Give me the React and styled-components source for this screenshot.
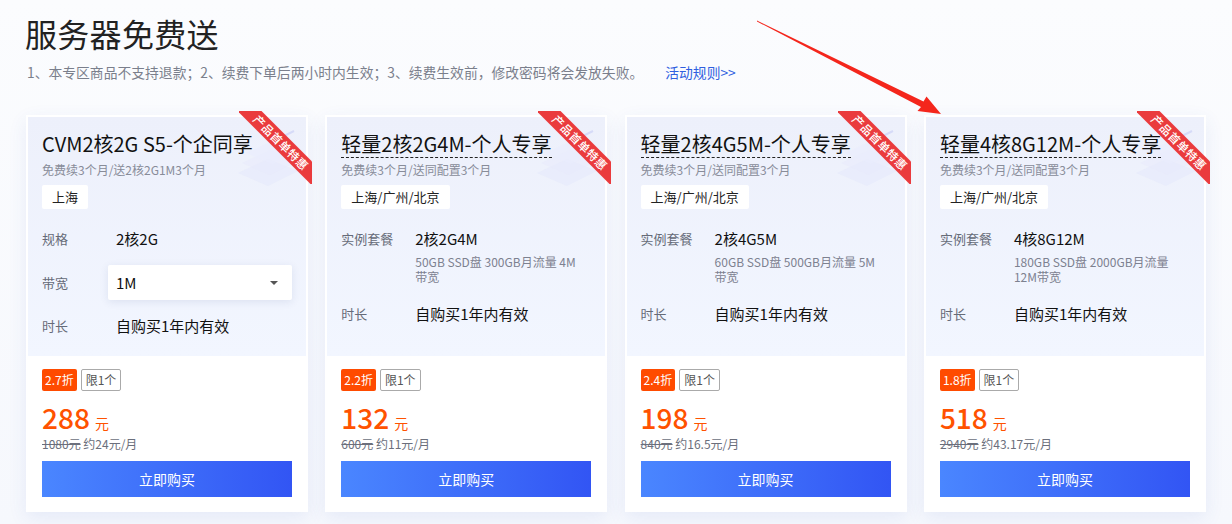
import React from "react";
import styled, { createGlobalStyle } from "styled-components";

const GlobalStyle = createGlobalStyle`
  html, body {
    margin: 0;
    padding: 0;
    background: #f8f9fd;
  }
  body {
    font-family: "Noto Sans CJK SC", "Noto Sans", sans-serif;
    color: #222;
  }
`;

const plans = [
  {
    title: "CVM2核2G S5-个企同享",
    dashed: false,
    sub: "免费续3个月/送2核2G1M3个月",
    region: "上海",
    rows: [
      { label: "规格", value: "2核2G" },
      { label: "带宽", select: "1M" },
      { label: "时长", value: "自购买1年内有效" },
    ],
    discount: "2.7折",
    price: "288",
    origin: "1080元",
    monthly: "约24元/月",
  },
  {
    title: "轻量2核2G4M-个人专享",
    dashed: true,
    sub: "免费续3个月/送同配置3个月",
    region: "上海/广州/北京",
    rows: [
      { label: "实例套餐", value: "2核2G4M", desc: ["50GB SSD盘 300GB月流量 4M", "带宽"] },
      { label: "时长", value: "自购买1年内有效" },
    ],
    discount: "2.2折",
    price: "132",
    origin: "600元",
    monthly: "约11元/月",
  },
  {
    title: "轻量2核4G5M-个人专享",
    dashed: true,
    sub: "免费续3个月/送同配置3个月",
    region: "上海/广州/北京",
    rows: [
      { label: "实例套餐", value: "2核4G5M", desc: ["60GB SSD盘 500GB月流量 5M", "带宽"] },
      { label: "时长", value: "自购买1年内有效" },
    ],
    discount: "2.4折",
    price: "198",
    origin: "840元",
    monthly: "约16.5元/月",
  },
  {
    title: "轻量4核8G12M-个人专享",
    dashed: true,
    sub: "免费续3个月/送同配置3个月",
    region: "上海/广州/北京",
    rows: [
      { label: "实例套餐", value: "4核8G12M", desc: ["180GB SSD盘 2000GB月流量", "12M带宽"] },
      { label: "时长", value: "自购买1年内有效" },
    ],
    discount: "1.8折",
    price: "518",
    origin: "2940元",
    monthly: "约43.17元/月",
  },
];

export default function App() {
  return (
    <>
      <GlobalStyle />
      <Page>
        <Header>
          <Title>服务器免费送</Title>
          <Notice>
            1、本专区商品不支持退款；2、续费下单后两小时内生效；3、续费生效前，修改密码将会发放失败。
            <RuleLink href="#">活动规则&gt;&gt;</RuleLink>
          </Notice>
        </Header>
        <Cards>
          {plans.map((p) => (
            <Card key={p.title}>
              <Top>
                <Deco viewBox="0 0 80 80">
                  <path d="M14 52 L44 38 L74 50 L44 65 Z" fill="#e4e7fb" opacity="0.5" />
                  <path d="M18 42 L46 29 L74 40 L46 54 Z" fill="#e7e9fc" opacity="0.5" />
                  <path d="M22 32 L48 20 L74 30 L48 43 Z" fill="#eaecfd" opacity="0.6" />
                  <path d="M58 16 L70 10" stroke="#d6dbf8" strokeWidth="2" />
                </Deco>
                <Ribbon>
                  <Strip>产品首单特惠</Strip>
                </Ribbon>
                <PlanTitle $dashed={p.dashed}>{p.title}</PlanTitle>
                <PlanSub>{p.sub}</PlanSub>
                <Region>{p.region}</Region>
                <Rows>
                  {p.rows.map((r) =>
                    r.select ? (
                      <Row key={r.label} $center>
                        <Label>{r.label}</Label>
                        <Select>
                          {r.select}
                          <Caret />
                        </Select>
                      </Row>
                    ) : (
                      <Row key={r.label}>
                        <Label>{r.label}</Label>
                        <ValueCol>
                          <Value>{r.value}</Value>
                          {r.desc && (
                            <Desc>
                              {r.desc.map((line) => (
                                <span key={line}>{line}</span>
                              ))}
                            </Desc>
                          )}
                        </ValueCol>
                      </Row>
                    )
                  )}
                </Rows>
              </Top>
              <Bottom>
                <Badges>
                  <Discount>{p.discount}</Discount>
                  <Limit>限1个</Limit>
                </Badges>
                <Price>
                  <Amount>{p.price}</Amount>
                  <Unit>元</Unit>
                </Price>
                <Origin>
                  <s>{p.origin}</s> {p.monthly}
                </Origin>
                <BuyButton>立即购买</BuyButton>
              </Bottom>
            </Card>
          ))}
        </Cards>
        <Arrow width="1232" height="130" viewBox="0 0 1232 130">
          <polygon
            points="757,20.5 757,21.5 921,107 917.5,111 941,114 926.5,96.5 923.5,101.5"
            fill="#f4261c"
          />
        </Arrow>
      </Page>
    </>
  );
}

const Page = styled.div`
  position: relative;
  width: 1232px;
  height: 524px;
  overflow: hidden;
  background: linear-gradient(180deg, #fbfcfe 0%, #f6f8fd 100%);
`;

const Header = styled.div`
  padding: 13px 0 0 25px;
`;

const Title = styled.h1`
  margin: 0;
  font-size: 32px;
  line-height: 40px;
  font-weight: 400;
  color: #222;
  letter-spacing: 0.3px;
`;

const Notice = styled.p`
  margin: 9px 0 0 2px;
  font-size: 13.8px;
  line-height: 20px;
  color: #7a7f8c;
`;

const RuleLink = styled.a`
  margin-left: 22px;
  color: #2f5fe0;
  text-decoration: none;
`;

const Cards = styled.div`
  display: grid;
  grid-template-columns: repeat(4, 282px);
  column-gap: 17.3px;
  padding: 0 26px;
  margin-top: 33px;
`;

const Card = styled.div`
  display: flex;
  flex-direction: column;
  border: 2px solid #fff;
  background: #fff;
  box-shadow: 0 6px 18px rgba(60, 90, 190, 0.09);
  position: relative;
`;

const Top = styled.div`
  position: relative;
  flex: 1;
  padding: 14px 14px 9px;
  background: linear-gradient(180deg, #edf0fb 0%, #f2f6ff 100%);
`;

const Deco = styled.svg`
  position: absolute;
  top: 4px;
  right: 2px;
  width: 80px;
  height: 80px;
`;

const Ribbon = styled.div`
  position: absolute;
  top: -6px;
  right: -6px;
  width: 73px;
  height: 73px;
  overflow: hidden;
  z-index: 2;
`;

const Strip = styled.div`
  position: absolute;
  left: 42px;
  top: 31px;
  width: 112px;
  height: 17px;
  margin-left: -56px;
  margin-top: -8.5px;
  transform: rotate(45deg);
  background: #ea3b3d;
  color: #fff;
  font-size: 11.5px;
  line-height: 17px;
  text-align: center;
  letter-spacing: 0.5px;
  font-weight: 500;
`;

const PlanTitle = styled.div`
  display: inline-block;
  position: relative;
  font-size: 20px;
  line-height: 26px;
  font-weight: 400;
  color: #111;
  border-bottom: 1px dashed ${(p) => (p.$dashed ? "#222" : "transparent")};
`;

const PlanSub = styled.div`
  margin-top: 3px;
  font-size: 12px;
  line-height: 18px;
  color: #888c99;
`;

const Region = styled.div`
  display: inline-block;
  margin-top: 6px;
  height: 24px;
  padding: 0 10px;
  background: #fff;
  border-radius: 2px;
  font-size: 13px;
  line-height: 24px;
  color: #222;
`;

const Rows = styled.div`
  margin-top: 9px;
  display: flex;
  flex-direction: column;
`;

const Row = styled.div`
  display: flex;
  align-items: ${(p) => (p.$center ? "center" : "flex-start")};
  padding: ${(p) => (p.$center ? "5px 0" : "9px 0")};
`;

const Label = styled.div`
  width: 74px;
  flex: none;
  font-size: 13px;
  line-height: 24px;
  color: #666b78;
`;

const ValueCol = styled.div`
  display: flex;
  flex-direction: column;
`;

const Value = styled.div`
  font-size: 15px;
  line-height: 24px;
  font-weight: 400;
  color: #111;
`;

const Desc = styled.div`
  display: flex;
  flex-direction: column;
  margin-top: 3px;
  font-size: 12px;
  line-height: 15px;
  color: #7d8190;
`;

const Select = styled.div`
  position: relative;
  margin-left: -8px;
  width: 185px;
  height: 35px;
  box-sizing: border-box;
  padding-left: 8px;
  background: #fff;
  border-radius: 2px;
  box-shadow: 0 2px 8px rgba(40, 60, 120, 0.1);
  font-size: 15px;
  line-height: 35px;
  color: #111;
`;

const Caret = styled.span`
  position: absolute;
  right: 14px;
  top: 16px;
  width: 0;
  height: 0;
  border-left: 4px solid transparent;
  border-right: 4px solid transparent;
  border-top: 4px solid #555;
`;

const Bottom = styled.div`
  padding: 13px 14px 13px;
  background: #fff;
`;

const Badges = styled.div`
  display: flex;
  gap: 4px;
`;

const Discount = styled.span`
  height: 22px;
  padding: 0 3px;
  background: #ff4b00;
  border-radius: 2px;
  color: #fff;
  font-size: 12px;
  line-height: 22px;
`;

const Limit = styled.span`
  height: 22px;
  box-sizing: border-box;
  padding: 0 4px;
  border: 1px solid #aaa;
  border-radius: 2px;
  color: #555;
  font-size: 12px;
  line-height: 20px;
`;

const Price = styled.div`
  display: flex;
  align-items: baseline;
  height: 32px;
  margin-top: 10px;
  color: #ff5200;
`;

const Amount = styled.span`
  font-size: 28px;
  line-height: 32px;
  font-weight: 500;
`;

const Unit = styled.span`
  margin-left: 5px;
  font-size: 14px;
  line-height: 32px;
`;

const Origin = styled.div`
  margin-top: 2px;
  font-size: 12px;
  line-height: 18px;
  color: #6b6f7c;
`;

const BuyButton = styled.button`
  display: block;
  margin-top: 8px;
  width: 100%;
  height: 36px;
  border: none;
  background: linear-gradient(90deg, #4a86ff 0%, #3255f4 100%);
  color: #fff;
  font-family: inherit;
  font-size: 14px;
  cursor: pointer;
`;

const Arrow = styled.svg`
  position: absolute;
  left: 0;
  top: 0;
  pointer-events: none;
`;
